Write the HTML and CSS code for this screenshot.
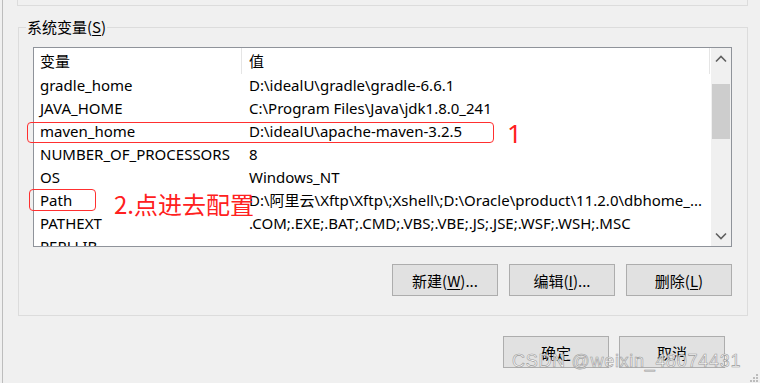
FILE: index.html
```html
<!DOCTYPE html>
<html lang="zh-CN">
<head>
<meta charset="utf-8">
<title>系统变量</title>
<link rel="stylesheet" href="styles.css">
</head>
<body>
<div class="frame">
  <div class="top-box"></div>

  <div class="group">
    <div class="legend">系统变量(<u>S</u>)</div>
    <div class="list">
      <div class="list-main">
        <div class="list-head">
          <div class="c1">变量</div>
          <div class="c2">值</div>
        </div>
        <div class="row"><div class="c1">gradle_home</div><div class="c2">D:\idealU\gradle\gradle-6.6.1</div></div>
        <div class="row"><div class="c1">JAVA_HOME</div><div class="c2">C:\Program Files\Java\jdk1.8.0_241</div></div>
        <div class="row"><div class="c1">maven_home</div><div class="c2">D:\idealU\apache-maven-3.2.5</div></div>
        <div class="row"><div class="c1">NUMBER_OF_PROCESSORS</div><div class="c2">8</div></div>
        <div class="row"><div class="c1">OS</div><div class="c2">Windows_NT</div></div>
        <div class="row"><div class="c1">Path</div><div class="c2">D:\阿里云\Xftp\Xftp\;Xshell\;D:\Oracle\product\11.2.0\dbhome_...</div></div>
        <div class="row"><div class="c1">PATHEXT</div><div class="c2">.COM;.EXE;.BAT;.CMD;.VBS;.VBE;.JS;.JSE;.WSF;.WSH;.MSC</div></div>
        <div class="row"><div class="c1">PERLLIB</div><div class="c2"></div></div>
      </div>
      <div class="scrollbar">
        <div class="arrow">
          <svg width="12" height="8" viewBox="0 0 12 8"><polyline points="1,6.5 6,1.5 11,6.5" fill="none" stroke="#606060" stroke-width="1.6"/></svg>
        </div>
        <div class="track"><div class="thumb"></div></div>
        <div class="arrow">
          <svg width="12" height="8" viewBox="0 0 12 8"><polyline points="1,1.5 6,6.5 11,1.5" fill="none" stroke="#606060" stroke-width="1.6"/></svg>
        </div>
      </div>
    </div>
    <div class="btn-row">
      <button class="btn">新建(<u>W</u>)...</button>
      <button class="btn">编辑(<u>I</u>)...</button>
      <button class="btn">删除(<u>L</u>)</button>
    </div>
  </div>

  <div class="dlg-row">
    <button class="btn">确定</button>
    <button class="btn">取消</button>
  </div>
</div>

<div class="mark mark-maven"></div>
<div class="note note-1">1</div>
<div class="mark mark-path"></div>
<div class="note note-2">2.点进去配置</div>
<div class="watermark">CSDN @weixin_48074431</div>
<svg class="grip" width="10" height="10" viewBox="0 0 10 10">
  <rect x="7" y="1" width="2" height="2" fill="#bcbcbc"/>
  <rect x="4" y="4" width="2" height="2" fill="#bcbcbc"/>
  <rect x="7" y="4" width="2" height="2" fill="#bcbcbc"/>
  <rect x="1" y="7" width="2" height="2" fill="#bcbcbc"/>
  <rect x="4" y="7" width="2" height="2" fill="#bcbcbc"/>
  <rect x="7" y="7" width="2" height="2" fill="#bcbcbc"/>
</svg>
</body>
</html>
```

FILE: styles.css
```css
html, body {
  margin: 0;
  padding: 0;
}
body {
  width: 760px;
  height: 383px;
  overflow: hidden;
  background: #f0f0f0;
  font-family: "Noto Sans", "Noto Sans CJK SC", sans-serif;
  font-size: 15px;
  color: #000;
  position: relative;
}
.frame {
  margin-left: 2px;
  border-left: 1px solid #bdbdbd;
  height: 383px;
  box-sizing: border-box;
  display: flow-root;
}
.top-box {
  margin-left: 14px;
  width: 729px;
  height: 5px;
  border: 1px solid #dcdcdc;
  border-top: none;
}
.group {
  margin-top: 21px;
  margin-left: 15px;
  width: 730px;
  box-sizing: border-box;
  border: 1px solid #dcdcdc;
  padding: 0 15px 19px 14px;
}
.legend {
  display: block;
  width: fit-content;
  margin-top: -11px;
  margin-left: -7px;
  padding: 0 1px;
  height: 20px;
  line-height: 20px;
  background: #f0f0f0;
  font-family: "Noto Sans CJK SC", sans-serif;
}
.legend u, .btn u {
  text-underline-offset: 2px;
}
.list {
  margin-top: 10px;
  height: 200px;
  box-sizing: border-box;
  border: 1px solid #8f939a;
  background: #fff;
  display: flex;
  overflow: hidden;
}
.list-main {
  flex: 1;
  overflow: hidden;
}
.list-head, .row {
  display: flex;
  white-space: nowrap;
}
.list-head {
  height: 26px;
  line-height: 26px;
  border-right: 1px solid #e5e5e5;
  margin-right: 1px;
  font-family: "Noto Sans CJK SC", sans-serif;
}
.list-head .c1 {
  border-right: 1px solid #e5e5e5;
}
.row {
  height: 23px;
  line-height: 23px;
}
.c1 {
  width: 208px;
  flex: none;
  padding-left: 6px;
  box-sizing: border-box;
}
.c2 {
  flex: 1;
  padding-left: 7px;
  overflow: hidden;
}
.scrollbar {
  width: 20px;
  flex: none;
  background: #f0f0f0;
  display: flex;
  flex-direction: column;
}
.arrow {
  height: 20px;
  display: flex;
  align-items: center;
  justify-content: center;
}
.scrollbar .arrow:first-child {
  height: 22px;
}
.track {
  flex: 1;
  padding: 14px 1px 0 1px;
}
.thumb {
  height: 55px;
  background: #cdcdcd;
}
.btn-row, .dlg-row {
  display: flex;
  justify-content: flex-end;
}
.btn-row {
  margin-top: 17px;
  gap: 11px;
}
.dlg-row {
  margin-top: 20px;
  margin-right: 35px;
  gap: 10px;
}
.btn {
  width: 106px;
  height: 32px;
  box-sizing: border-box;
  border: 1px solid #adadad;
  background: #e1e1e1;
  font-family: "Noto Sans CJK SC", sans-serif;
  font-size: 15px;
  color: #000;
  padding: 0;
  margin: 0;
}
.mark {
  position: absolute;
  border: 1px solid #ff3030;
  border-radius: 4px;
  box-sizing: border-box;
}
.mark-maven {
  left: 27px;
  top: 122px;
  width: 467px;
  height: 21px;
}
.mark-path {
  left: 29px;
  top: 189px;
  width: 67px;
  height: 22px;
}
.note {
  position: absolute;
  color: #ff2020;
  line-height: 1;
}
.note-1 {
  left: 507px;
  top: 120px;
  font-family: "Noto Sans", sans-serif;
  font-size: 26px;
  font-weight: 400;
}
.note-2 {
  left: 114px;
  top: 192px;
  font-family: "Noto Sans CJK SC", sans-serif;
  font-size: 24px;
}
.watermark {
  position: absolute;
  left: 512px;
  top: 351px;
  font-family: "Liberation Sans", sans-serif;
  font-size: 18px;
  letter-spacing: 0.7px;
  color: rgba(255, 255, 255, 0.85);
  -webkit-text-stroke: 0.6px #9a9a9a;
  line-height: 20px;
  white-space: nowrap;
}
.grip {
  position: absolute;
  right: 1px;
  bottom: 0;
}
```
